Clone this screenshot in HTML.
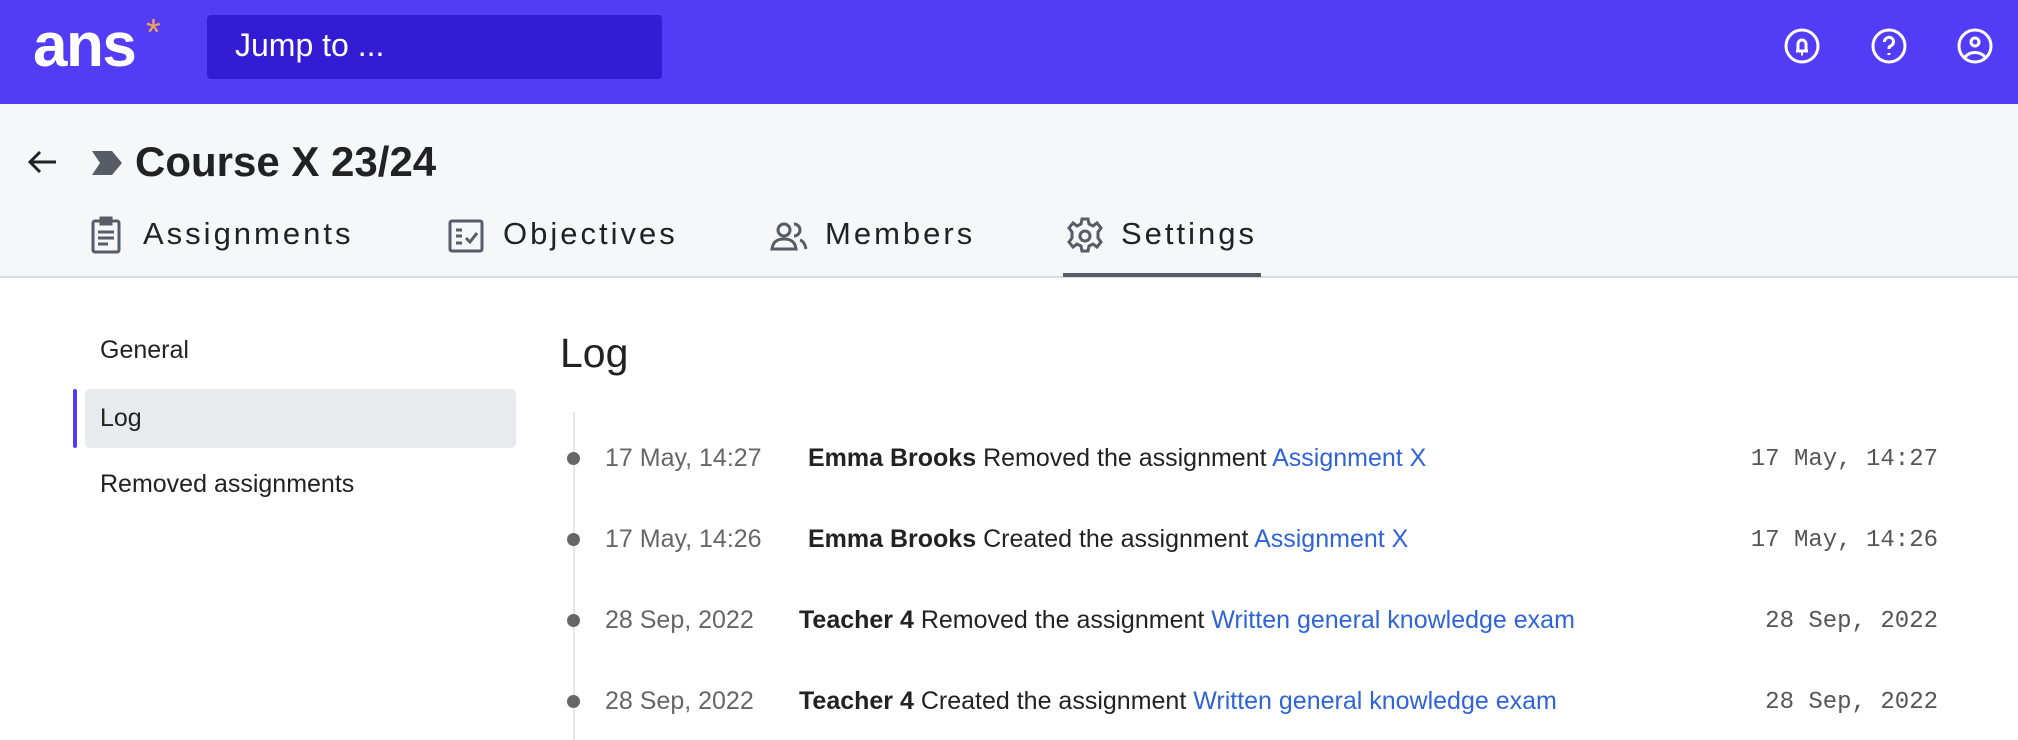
<!DOCTYPE html>
<html><head><meta charset="utf-8"><style>
*{margin:0;padding:0;box-sizing:border-box}
body{width:2018px;height:740px;overflow:hidden;background:#fff;font-family:"Liberation Sans",sans-serif;position:relative;color:#222}
.abs{position:absolute;white-space:nowrap}
.hdr{position:absolute;left:0;top:0;width:2018px;height:104px;background:#533cf5}
.band{position:absolute;left:0;top:104px;width:2018px;height:174px;background:#f6f7f9;border-bottom:2px solid #d8dbe0}
.tab{font-size:31px;letter-spacing:3px;color:#222;top:216px}
.side{font-size:25px;color:#222}
.dt{font-size:25px;color:#666}
.tx{font-size:25px;color:#222}
.tx b{font-weight:bold}
.tx a{color:#2f63d9;text-decoration:none}
.mono{font-family:"Liberation Mono",monospace;font-size:24px;color:#555;right:80px}
.dot{position:absolute;left:567px;width:13px;height:13px;border-radius:50%;background:#666}
</style></head><body>
<div class="hdr"></div>
<div class="abs" style="left:33px;top:10px;font-size:62px;font-weight:bold;color:#fff;letter-spacing:-1.5px">ans</div>
<div class="abs" style="left:146px;top:12px;font-size:38px;color:#f0a35a">*</div>
<div class="abs" style="left:207px;top:15px;width:455px;height:64px;background:#331cd4;border-radius:4px"></div>
<div class="abs" style="left:235px;top:27px;font-size:32px;color:#fff">Jump to ...</div>
<svg class="abs" style="left:1784px;top:28px" width="36" height="36" viewBox="0 0 36 36" fill="none" stroke="#fff" stroke-width="3"><circle cx="18" cy="18" r="16"/><path d="M12 23h12M14 23v-7a4 4 0 0 1 8 0v7M17 26h2"/></svg>
<svg class="abs" style="left:1871px;top:28px" width="36" height="36" viewBox="0 0 36 36" fill="none" stroke="#fff" stroke-width="3"><circle cx="18" cy="18" r="16"/><path d="M13.5 14a4.5 4.5 0 1 1 6 4c-1.5.7-1.5 1.5-1.5 3"/><path d="M18 25v2"/></svg>
<svg class="abs" style="left:1957px;top:28px" width="36" height="36" viewBox="0 0 36 36" fill="none" stroke="#fff" stroke-width="3"><circle cx="18" cy="18" r="16"/><circle cx="18" cy="14" r="4"/><path d="M8 29c5-6 15-6 20 0"/></svg>

<div class="band"></div>
<svg class="abs" style="left:26px;top:149px" width="32" height="26" viewBox="0 0 32 26" fill="none" stroke="#222" stroke-width="3"><path d="M30 13H4M14 3L4 13l10 10"/></svg>
<svg class="abs" style="left:92px;top:151px" width="32" height="24" viewBox="0 0 32 24"><path d="M0 0h20l10 12-10 12H0l8-12z" fill="#575c66"/></svg>
<div class="abs" style="left:135px;top:138px;font-size:42px;font-weight:bold;color:#222">Course X 23/24</div>

<svg class="abs" style="left:91px;top:216px" width="30" height="38" viewBox="0 0 30 38" fill="none" stroke="#575c66" stroke-width="3"><rect x="2" y="5" width="26" height="31" rx="2"/><rect x="10" y="2" width="10" height="6" fill="#575c66"/><path d="M7 16h16M7 22h16M7 28h10"/></svg>
<div class="abs tab" style="left:143px">Assignments</div>
<svg class="abs" style="left:448px;top:219px" width="36" height="34" viewBox="0 0 36 34" fill="none" stroke="#575c66" stroke-width="3"><rect x="2" y="2" width="32" height="30" rx="2"/><path d="M8 11h6M8 17h6M8 24h6M18 19l4 4 7-9"/></svg>
<div class="abs tab" style="left:503px">Objectives</div>
<svg class="abs" style="left:770px;top:221px" width="38" height="30" viewBox="0 0 38 30" fill="none" stroke="#575c66" stroke-width="3"><circle cx="14" cy="9" r="6"/><path d="M2 28c1-8 6-10 12-10s11 2 12 10z"/><path d="M24 3a6 6 0 0 1 0 12M30 19c3 1 5 4 6 9"/></svg>
<div class="abs tab" style="left:825px">Members</div>
<svg class="abs" style="left:1067px;top:217px" width="36" height="38" viewBox="0 0 36 38" fill="none" stroke="#575c66" stroke-width="3"><path d="M15 2h6l1 5 4 2 4-3 4 5-3 4v6l3 4-4 5-4-3-4 2-1 5h-6l-1-5-4-2-4 3-4-5 3-4v-6L2 11l4-5 4 3 4-2z"/><circle cx="18" cy="19" r="5"/></svg>
<div class="abs tab" style="left:1121px">Settings</div>
<div class="abs" style="left:1063px;top:273px;width:198px;height:4px;background:#575c66"></div>

<div class="abs side" style="left:100px;top:336px">General</div>
<div class="abs" style="left:85px;top:389px;width:431px;height:59px;background:#e8eaed;border-radius:5px"></div>
<div class="abs" style="left:73px;top:389px;width:4px;height:59px;background:#533cf5;border-radius:2px"></div>
<div class="abs side" style="left:100px;top:404px">Log</div>
<div class="abs side" style="left:100px;top:470px">Removed assignments</div>

<div class="abs" style="left:560px;top:330px;font-size:41px;color:#222">Log</div>
<div class="abs" style="left:573px;top:412px;width:2px;height:328px;background:#e6e6e6"></div>

<div class="dot" style="top:452px"></div>
<div class="abs dt" style="left:605px;top:444px">17 May, 14:27</div>
<div class="abs tx" style="left:808px;top:444px"><b>Emma Brooks</b> Removed the assignment <a>Assignment X</a></div>
<div class="abs mono" style="top:446px">17 May, 14:27</div>

<div class="dot" style="top:533px"></div>
<div class="abs dt" style="left:605px;top:525px">17 May, 14:26</div>
<div class="abs tx" style="left:808px;top:525px"><b>Emma Brooks</b> Created the assignment <a>Assignment X</a></div>
<div class="abs mono" style="top:527px">17 May, 14:26</div>

<div class="dot" style="top:614px"></div>
<div class="abs dt" style="left:605px;top:606px">28 Sep, 2022</div>
<div class="abs tx" style="left:799px;top:606px"><b>Teacher 4</b> Removed the assignment <a>Written general knowledge exam</a></div>
<div class="abs mono" style="top:608px">28 Sep, 2022</div>

<div class="dot" style="top:695px"></div>
<div class="abs dt" style="left:605px;top:687px">28 Sep, 2022</div>
<div class="abs tx" style="left:799px;top:687px"><b>Teacher 4</b> Created the assignment <a>Written general knowledge exam</a></div>
<div class="abs mono" style="top:689px">28 Sep, 2022</div>
</body></html>
